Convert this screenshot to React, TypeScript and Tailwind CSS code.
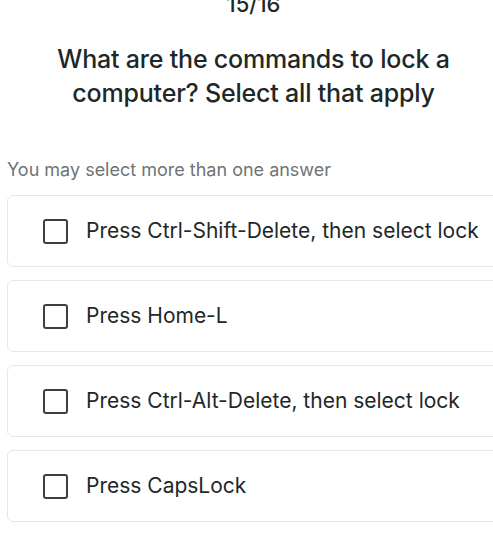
import React from "react";

const options = [
  "Press Ctrl-Shift-Delete, then select lock",
  "Press Home-L",
  "Press Ctrl-Alt-Delete, then select lock",
  "Press CapsLock",
];

export default function App() {
  return (
    <div className="w-[493px] h-[547px] overflow-hidden bg-white" style={{ fontFamily: "Inter, 'Noto Sans', sans-serif" }}>
      <div className="w-[507px] px-[7px] text-[#1e2828]">
        <div className="text-center text-[22px] leading-[28px] font-medium mt-[-10px]">15/16</div>
        <h1 className="mt-[24px] mx-auto w-[420px] text-center text-[25px] leading-[34px] font-medium tracking-[-0.2px]">
          What are the commands to lock a computer? Select all that apply
        </h1>
        <p className="mt-[48px] text-[18px] leading-[24px] text-[#6e7575]">You may select more than one answer</p>
        <div className="mt-[13px] flex flex-col gap-[13px]">
          {options.map((o) => (
            <div key={o} className="h-[72px] rounded-[6px] border border-[#e6e8e8] flex items-center pl-[35px] gap-[18px]">
              <div className="w-[25px] h-[25px] rounded-[3px] border-[2.5px] border-[#384242] shrink-0" />
              <span className="text-[21px] text-[#1e2828] whitespace-nowrap">{o}</span>
            </div>
          ))}
        </div>
      </div>
    </div>
  );
}
